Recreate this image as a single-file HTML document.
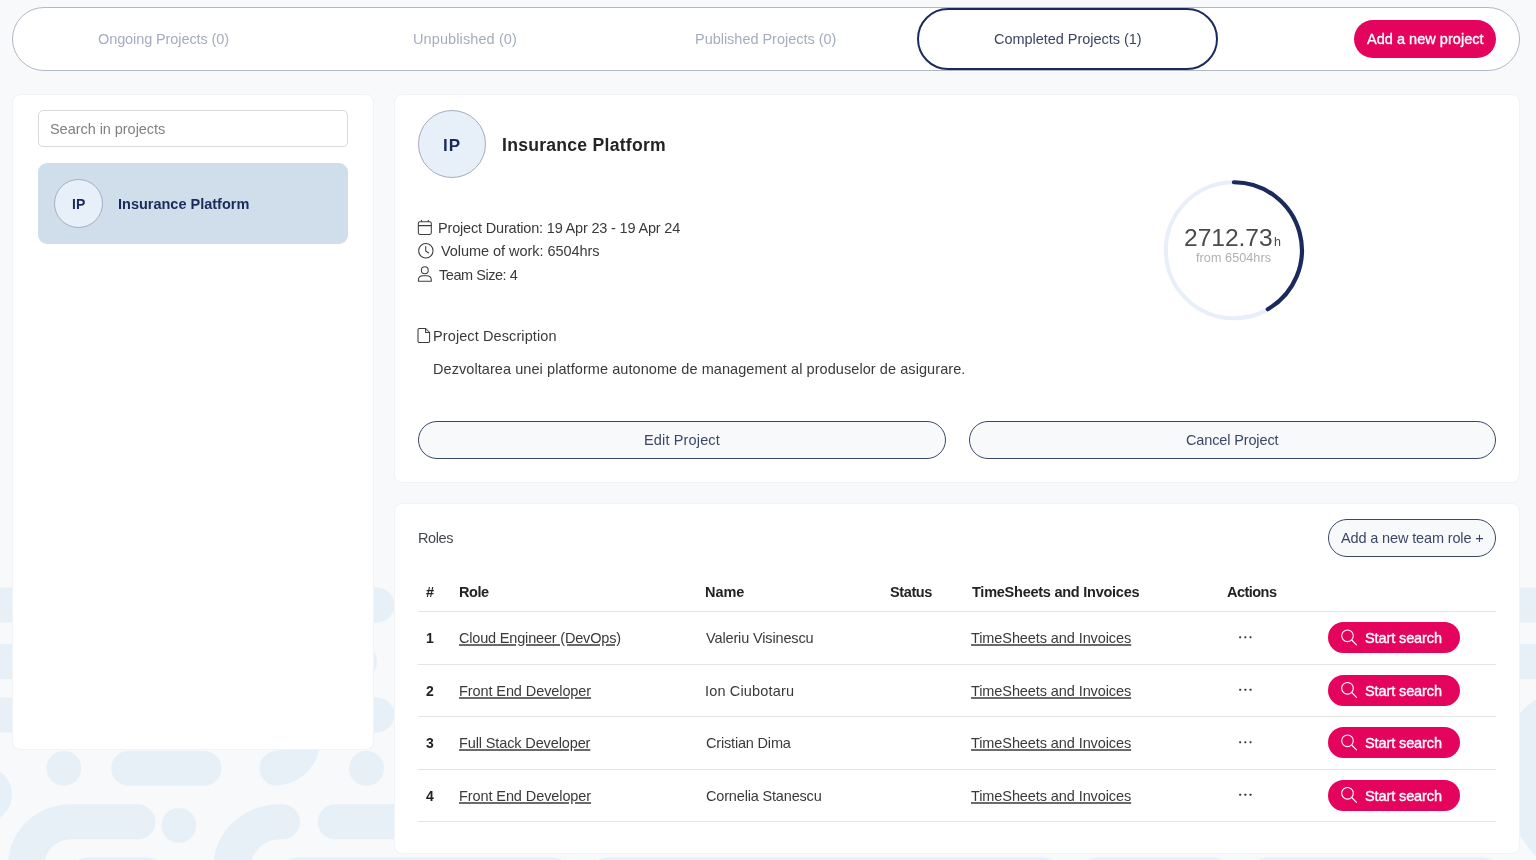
<!DOCTYPE html>
<html lang="en"><head><meta charset="utf-8"><title>Projects</title>
<style>
html,body{margin:0;padding:0}
body{width:1536px;height:860px;overflow:hidden;background:#f7f9fb;font-family:"Liberation Sans",sans-serif;position:relative}
.grp{display:block;margin:0;padding:0}
.t{position:absolute;white-space:nowrap;line-height:20px;z-index:5;will-change:transform;margin:0;padding:0}
a.t{cursor:pointer}
.b{position:absolute;box-sizing:border-box}
.card{background:#fff;border:1px solid #f1f3f6;border-radius:8px}
.pill{border:1px solid #3b4766;background:#f8f9fb;border-radius:19px}
.pink{background:#e4045d}
.ln{position:absolute;left:417.5px;width:1078.5px;height:1px;background:#e4e4e5}
.av{border:1px solid #a4adc0;background:#e7eff8;border-radius:50%}
svg{position:absolute;left:0;top:0;overflow:visible;pointer-events:none}
</style></head><body>
<svg class="bgpattern" width="1536" height="860" viewBox="0 0 1536 860" fill="#e8f0f7" style="z-index:0" aria-hidden="true"><rect x="-40" y="587.5" width="100" height="35" rx="17.5"/><rect x="-40" y="644" width="100" height="35" rx="17.5"/><rect x="-40" y="697.5" width="100" height="35" rx="17.5"/><rect x="330" y="587.5" width="64.4" height="35" rx="17.5"/><rect x="300" y="644" width="77" height="35" rx="17.5"/><rect x="330" y="697.5" width="64.4" height="35" rx="17.5"/><rect x="1490" y="587.5" width="90" height="35" rx="17.5"/><rect x="1490" y="644" width="90" height="35" rx="17.5"/><path d="M1537,698.5 Q1527,705 1519,714 L1519,834 Q1527,847 1537,858 Z"/><rect x="46.4" y="750.8" width="34.9" height="35" rx="17.5"/><rect x="111.2" y="750.8" width="110.2" height="35" rx="17.5"/><path d="M320,700 V740 A45.6,45.6 0 0 1 277,785.8 A17.5,17.5 0 0 1 277,750.8 A10,10 0 0 0 285,740 V700 Z"/><rect x="349" y="750.8" width="35" height="35" rx="17.5"/><circle cx="-16" cy="794.5" r="28"/><path d="M7.8,866 A62,62 0 0 1 69.8,804.3 H138 A17.5,17.5 0 0 1 138,839.3 H71 A27,27 0 0 0 44,866 Z"/><circle cx="178.8" cy="825.4" r="17.4"/><path d="M213.5,866 A66,62 0 0 1 279.5,804.3 H282.5 A17.5,17.5 0 0 1 282.5,839.3 H281 A30,27 0 0 0 251,866 Z"/><rect x="317.7" y="804.3" width="142.3" height="35" rx="17.5"/><rect x="70" y="857.5" width="94" height="35" rx="17.5"/><rect x="280" y="857.5" width="290" height="35" rx="17.5"/><rect x="590" y="857.5" width="470" height="35" rx="17.5"/><rect x="1080" y="857.5" width="150" height="35" rx="17.5"/><rect x="1250" y="857.5" width="250" height="35" rx="17.5"/></svg>
<nav class="grp tabs" aria-label="Project filters">
<div class="b " style="left:12px;top:7px;width:1508px;height:63.5px;background:#fff;border:1px solid #b2b8c6;border-radius:32px;z-index:1"></div>
<div class="b " style="left:917px;top:8px;width:301px;height:61.5px;background:#fff;border:2px solid #1b2a5c;border-radius:31px;z-index:2"></div>
<div class="b pink" style="left:1354px;top:19.8px;width:142.2px;height:37.8px;border-radius:19px;z-index:2"></div>
<span class="t" style="left:98.00px;top:29.37px;font-size:14.5px;letter-spacing:-0.100px;color:#a4acbe;">Ongoing Projects (0)</span>
<span class="t" style="left:412.75px;top:29.37px;font-size:14.5px;letter-spacing:0.105px;color:#a4acbe;">Unpublished (0)</span>
<span class="t" style="left:695.25px;top:29.37px;font-size:14.5px;letter-spacing:-0.024px;color:#a4acbe;">Published Projects (0)</span>
<span class="t" style="left:993.75px;top:29.37px;font-size:14.5px;letter-spacing:-0.033px;color:#3a4565;">Completed Projects (1)</span>
<span class="t" style="left:1367.25px;top:28.67px;font-size:14.5px;letter-spacing:0.032px;color:#fff;-webkit-text-stroke:0.35px #fff;">Add a new project</span>
</nav>
<aside class="grp sidebar" aria-label="Project list">
<div class="b card" style="left:12px;top:94px;width:362px;height:656px;z-index:1"></div>
<div class="b " style="left:37.5px;top:110px;width:310.9px;height:37px;background:#fff;border:1px solid #d9d9da;border-radius:5px;z-index:2"></div>
<div class="b " style="left:37.5px;top:163px;width:310.75px;height:80.75px;background:#d0deec;border-radius:9px;z-index:2"></div>
<div class="b av" style="left:53.6px;top:179px;width:49px;height:49px;z-index:3"></div>
<span class="t" style="left:49.80px;top:119.47px;font-size:14.5px;letter-spacing:-0.047px;color:#808183;">Search in projects</span>
<span class="t" style="left:72.00px;top:193.90px;font-size:14px;letter-spacing:0.110px;color:#1b2a5c;font-weight:700;">IP</span>
<span class="t" style="left:118.00px;top:193.72px;font-size:14.5px;letter-spacing:-0.003px;color:#1b2a5c;font-weight:700;">Insurance Platform</span>
</aside>
<section class="grp project" aria-label="Project details">
<div class="b card" style="left:394px;top:94px;width:1126px;height:389px;z-index:1"></div>
<div class="b av" style="left:418px;top:110.4px;width:67.8px;height:67.8px;z-index:3"></div>
<div class="b pill" style="left:418px;top:421.25px;width:527.5px;height:37.25px;z-index:2"></div>
<div class="b pill" style="left:968.75px;top:421.25px;width:527.5px;height:37.25px;z-index:2"></div>
<svg class="icons" width="1536" height="860" viewBox="0 0 1536 860" fill="none" stroke="#3b3c3e" stroke-width="1.05" stroke-linecap="round" stroke-linejoin="round" style="z-index:4" aria-hidden="true"><g class="i-calendar"><rect x="418.35" y="221.7" width="12.95" height="12.7" rx="1.6"/><path d="M418.35,225.6H431.3M421.4,220V221.7M428.3,220V221.7" stroke-linecap="butt"/></g><g class="i-clock"><circle cx="425.85" cy="250.75" r="7.2"/><path d="M425.7,246.4V251L428.7,253"/></g><g class="i-user"><circle cx="424.8" cy="270.3" r="3.45"/><path d="M418.4,281.2V280C418.4,277.2 420.6,275.75 423,275.75H426.7C429.1,275.75 431.3,277.2 431.3,280V281.2Z"/></g><g class="i-file"><path d="M418,329.8A1.3,1.3 0 0 1 419.3,328.5H425.6L429.6,332.5V341.2A1.3,1.3 0 0 1 428.3,342.5H419.3A1.3,1.3 0 0 1 418,341.2Z"/><path d="M425.6,328.7V332.5H429.4"/></g><g class="donut"><circle cx="1233.9" cy="250.25" r="68" stroke="#e9eefb" stroke-width="4"/><path d="M1233.9,182.25A68,68 0 0 1 1267.75,309.23" stroke="#1b2a5c" stroke-width="4.2"/></g></svg>
<span class="t" style="left:442.90px;top:136.01px;font-size:17px;letter-spacing:0.977px;color:#1b2a5c;font-weight:700;">IP</span>
<span class="t" style="left:501.60px;top:134.80px;font-size:17.6px;letter-spacing:0.252px;color:#232427;font-weight:700;">Insurance Platform</span>
<span class="t" style="left:438.25px;top:217.97px;font-size:14.5px;letter-spacing:-0.180px;color:#393a3c;">Project Duration: 19 Apr 23 - 19 Apr 24</span>
<span class="t" style="left:441.25px;top:241.27px;font-size:14.5px;letter-spacing:-0.049px;color:#393a3c;">Volume of work: 6504hrs</span>
<span class="t" style="left:439.25px;top:264.77px;font-size:14.5px;letter-spacing:-0.455px;color:#393a3c;">Team Size: 4</span>
<span class="t" style="left:433.25px;top:325.72px;font-size:14.5px;letter-spacing:0.104px;color:#393a3c;">Project Description</span>
<span class="t" style="left:433.25px;top:358.72px;font-size:14.5px;letter-spacing:0.068px;color:#393a3c;">Dezvoltarea unei platforme autonome de management al produselor de asigurare.</span>
<span class="t" style="left:643.50px;top:429.97px;font-size:14.5px;letter-spacing:0.149px;color:#3b4766;">Edit Project</span>
<span class="t" style="left:1186.25px;top:429.97px;font-size:14.5px;letter-spacing:-0.136px;color:#3b4766;">Cancel Project</span>
<span class="t" style="left:1184.20px;top:227.67px;font-size:24.6px;letter-spacing:-0.037px;color:#4a4a4a;">2712.73</span>
<span class="t" style="left:1273.90px;top:231.87px;font-size:12.5px;letter-spacing:0.000px;color:#4a4a4a;">h</span>
<span class="t" style="left:1195.50px;top:248.13px;font-size:12.6px;letter-spacing:0.073px;color:#b0b0b0;">from 6504hrs</span>
</section>
<section class="grp roles" aria-label="Roles">
<div class="b card" style="left:394px;top:503px;width:1126px;height:351px;z-index:1"></div>
<div class="b pill" style="left:1328px;top:519px;width:168.25px;height:37.6px;z-index:2"></div>
<div class="ln" style="top:611px;z-index:2"></div>
<div class="ln" style="top:664px;z-index:2"></div>
<div class="ln" style="top:716px;z-index:2"></div>
<div class="ln" style="top:769px;z-index:2"></div>
<div class="ln" style="top:821px;z-index:2"></div>
<div class="b pink" style="left:1328px;top:622.1px;width:131.7px;height:31.1px;border-radius:15.6px;z-index:2"></div>
<div class="b pink" style="left:1328px;top:674.6px;width:131.7px;height:31.1px;border-radius:15.6px;z-index:2"></div>
<div class="b pink" style="left:1328px;top:727.1px;width:131.7px;height:31.1px;border-radius:15.6px;z-index:2"></div>
<div class="b pink" style="left:1328px;top:779.6px;width:131.7px;height:31.1px;border-radius:15.6px;z-index:2"></div>
<svg class="icons" width="1536" height="860" viewBox="0 0 1536 860" fill="none" stroke="#3b3c3e" stroke-width="1.05" stroke-linecap="round" stroke-linejoin="round" style="z-index:4" aria-hidden="true"><g class="i-search" stroke="#fff" stroke-width="1.1"><circle cx="1347.5" cy="635.8" r="5.8"/><path d="M1351.7,640L1356.5,644.8"/></g><g class="i-ellipsis" fill="#33373c" stroke="none"><rect x="1239.20" y="636.35" width="1.9" height="1.9" rx="0.4"/><rect x="1244.40" y="636.35" width="1.9" height="1.9" rx="0.4"/><rect x="1249.60" y="636.35" width="1.9" height="1.9" rx="0.4"/></g><g class="i-search" stroke="#fff" stroke-width="1.1"><circle cx="1347.5" cy="688.3" r="5.8"/><path d="M1351.7,692.5L1356.5,697.3"/></g><g class="i-ellipsis" fill="#33373c" stroke="none"><rect x="1239.20" y="688.85" width="1.9" height="1.9" rx="0.4"/><rect x="1244.40" y="688.85" width="1.9" height="1.9" rx="0.4"/><rect x="1249.60" y="688.85" width="1.9" height="1.9" rx="0.4"/></g><g class="i-search" stroke="#fff" stroke-width="1.1"><circle cx="1347.5" cy="740.8" r="5.8"/><path d="M1351.7,745L1356.5,749.8"/></g><g class="i-ellipsis" fill="#33373c" stroke="none"><rect x="1239.20" y="741.35" width="1.9" height="1.9" rx="0.4"/><rect x="1244.40" y="741.35" width="1.9" height="1.9" rx="0.4"/><rect x="1249.60" y="741.35" width="1.9" height="1.9" rx="0.4"/></g><g class="i-search" stroke="#fff" stroke-width="1.1"><circle cx="1347.5" cy="793.3" r="5.8"/><path d="M1351.7,797.5L1356.5,802.3"/></g><g class="i-ellipsis" fill="#33373c" stroke="none"><rect x="1239.20" y="793.85" width="1.9" height="1.9" rx="0.4"/><rect x="1244.40" y="793.85" width="1.9" height="1.9" rx="0.4"/><rect x="1249.60" y="793.85" width="1.9" height="1.9" rx="0.4"/></g></svg>
<span class="t" style="left:417.75px;top:527.97px;font-size:14.5px;letter-spacing:-0.393px;color:#45494f;">Roles</span>
<span class="t" style="left:1340.75px;top:527.97px;font-size:14.5px;letter-spacing:-0.139px;color:#3b4766;">Add a new team role +</span>
<span class="t" style="left:426.25px;top:581.72px;font-size:14.5px;letter-spacing:0.000px;color:#222326;font-weight:700;">#</span>
<span class="t" style="left:458.70px;top:581.72px;font-size:14.5px;letter-spacing:-0.436px;color:#222326;font-weight:700;">Role</span>
<span class="t" style="left:705.00px;top:581.72px;font-size:14.5px;letter-spacing:-0.043px;color:#222326;font-weight:700;">Name</span>
<span class="t" style="left:889.60px;top:581.72px;font-size:14.5px;letter-spacing:-0.390px;color:#222326;font-weight:700;">Status</span>
<span class="t" style="left:971.50px;top:581.72px;font-size:14.5px;letter-spacing:-0.247px;color:#222326;font-weight:700;">TimeSheets and Invoices</span>
<span class="t" style="left:1227.00px;top:581.72px;font-size:14.5px;letter-spacing:-0.535px;color:#222326;font-weight:700;">Actions</span>
<span class="t" style="left:426.20px;top:628.45px;font-size:14px;letter-spacing:0.000px;color:#222326;font-weight:700;">1</span>
<a class="t" style="left:459.00px;top:628.27px;font-size:14.5px;letter-spacing:-0.181px;color:#393a3c;text-decoration:underline;text-decoration-thickness:1.5px;text-underline-offset:1.2px;text-decoration-color:rgba(57,58,60,.75);">Cloud Engineer (DevOps)</a>
<span class="t" style="left:705.50px;top:628.27px;font-size:14.5px;letter-spacing:-0.139px;color:#393a3c;">Valeriu Visinescu</span>
<a class="t" style="left:971.20px;top:628.27px;font-size:14.5px;letter-spacing:-0.092px;color:#393a3c;text-decoration:underline;text-decoration-thickness:1.5px;text-underline-offset:1.2px;text-decoration-color:rgba(57,58,60,.75);">TimeSheets and Invoices</a>
<span class="t" style="left:1365.30px;top:628.17px;font-size:14.5px;letter-spacing:-0.110px;color:#fff;-webkit-text-stroke:0.35px #fff;">Start search</span>
<span class="t" style="left:426.20px;top:680.90px;font-size:14px;letter-spacing:0.000px;color:#222326;font-weight:700;">2</span>
<a class="t" style="left:459.20px;top:680.72px;font-size:14.5px;letter-spacing:-0.092px;color:#393a3c;text-decoration:underline;text-decoration-thickness:1.5px;text-underline-offset:1.2px;text-decoration-color:rgba(57,58,60,.75);">Front End Developer</a>
<span class="t" style="left:704.50px;top:680.72px;font-size:14.5px;letter-spacing:0.159px;color:#393a3c;">Ion Ciubotaru</span>
<a class="t" style="left:971.20px;top:680.72px;font-size:14.5px;letter-spacing:-0.092px;color:#393a3c;text-decoration:underline;text-decoration-thickness:1.5px;text-underline-offset:1.2px;text-decoration-color:rgba(57,58,60,.75);">TimeSheets and Invoices</a>
<span class="t" style="left:1365.30px;top:680.62px;font-size:14.5px;letter-spacing:-0.110px;color:#fff;-webkit-text-stroke:0.35px #fff;">Start search</span>
<span class="t" style="left:426.20px;top:733.35px;font-size:14px;letter-spacing:0.000px;color:#222326;font-weight:700;">3</span>
<a class="t" style="left:459.20px;top:733.17px;font-size:14.5px;letter-spacing:-0.124px;color:#393a3c;text-decoration:underline;text-decoration-thickness:1.5px;text-underline-offset:1.2px;text-decoration-color:rgba(57,58,60,.75);">Full Stack Developer</a>
<span class="t" style="left:705.50px;top:733.17px;font-size:14.5px;letter-spacing:-0.179px;color:#393a3c;">Cristian Dima</span>
<a class="t" style="left:971.20px;top:733.17px;font-size:14.5px;letter-spacing:-0.092px;color:#393a3c;text-decoration:underline;text-decoration-thickness:1.5px;text-underline-offset:1.2px;text-decoration-color:rgba(57,58,60,.75);">TimeSheets and Invoices</a>
<span class="t" style="left:1365.30px;top:733.07px;font-size:14.5px;letter-spacing:-0.110px;color:#fff;-webkit-text-stroke:0.35px #fff;">Start search</span>
<span class="t" style="left:426.20px;top:785.80px;font-size:14px;letter-spacing:0.000px;color:#222326;font-weight:700;">4</span>
<a class="t" style="left:459.20px;top:785.62px;font-size:14.5px;letter-spacing:-0.092px;color:#393a3c;text-decoration:underline;text-decoration-thickness:1.5px;text-underline-offset:1.2px;text-decoration-color:rgba(57,58,60,.75);">Front End Developer</a>
<span class="t" style="left:705.50px;top:785.62px;font-size:14.5px;letter-spacing:-0.170px;color:#393a3c;">Cornelia Stanescu</span>
<a class="t" style="left:971.20px;top:785.62px;font-size:14.5px;letter-spacing:-0.092px;color:#393a3c;text-decoration:underline;text-decoration-thickness:1.5px;text-underline-offset:1.2px;text-decoration-color:rgba(57,58,60,.75);">TimeSheets and Invoices</a>
<span class="t" style="left:1365.30px;top:785.52px;font-size:14.5px;letter-spacing:-0.110px;color:#fff;-webkit-text-stroke:0.35px #fff;">Start search</span>
</section>
</body></html>
